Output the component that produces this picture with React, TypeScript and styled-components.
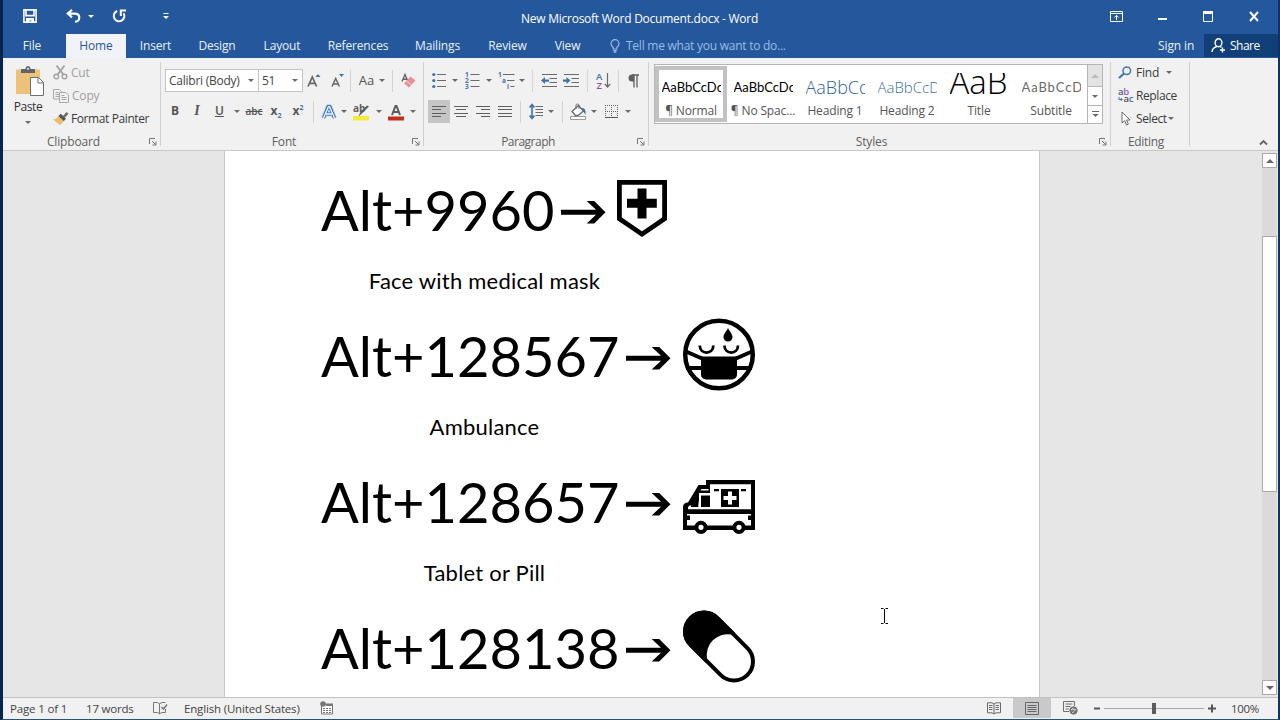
import React from "react";
import styled, { createGlobalStyle } from "styled-components";

const Global = createGlobalStyle`
  * { box-sizing: border-box; }
  body { margin: 0; background: #e6e6e6; font-family: "Open Sans", "Noto Sans", sans-serif; }
  svg { display: block; flex: none; overflow: visible; }
`;

const Window = styled.div`
  position: relative;
  width: 1280px;
  height: 720px;
  display: flex;
  flex-direction: column;
  overflow: hidden;
  background: #e6e6e6;
  border-left: 3px solid #06234f;
  border-right: 2px solid #14306a;
  border-bottom: 1px solid #2d5075;
  font-size: 12px;
  color: #444;
`;

/* ---------- title bar and tabs ---------- */

const TitleBar = styled.header`
  height: 34px;
  flex: none;
  display: flex;
  align-items: center;
  justify-content: space-between;
  padding-bottom: 2px;
  background: #24579b;
  color: #fff;
`;
const QuickAccess = styled.div`
  width: 518px;
  display: flex;
  align-items: center;
  padding-left: 20px;
`;
const DocTitle = styled.div`
  flex: 1;
  padding-top: 4px;
  letter-spacing: -0.25px;
  white-space: nowrap;
`;
const WindowButtons = styled.div`
  display: flex;
  width: 185px;
`;
const WindowButton = styled.div`
  width: 46px;
  flex: none;
  display: flex;
  justify-content: center;
`;
const TabBar = styled.nav`
  height: 24px;
  flex: none;
  display: flex;
  align-items: stretch;
  background: #24579b;
  color: #e9f1fb;
`;
const Tab = styled.div<{ $w: number; $active?: boolean; $inset?: number }>`
  width: ${(p) => p.$w}px;
  padding: 0 ${(p) => p.$inset ?? 0}px 1px 0;
  display: flex;
  justify-content: center;
  align-items: center;
  letter-spacing: -0.15px;
  white-space: nowrap;
  background: ${(p) => (p.$active ? "#f1f3f8" : "transparent")};
  color: ${(p) => (p.$active ? "#2b579a" : "inherit")};
`;
const TellMe = styled.div`
  flex: 1;
  display: flex;
  align-items: center;
  gap: 6px;
  padding: 0 0 1px 16px;
  letter-spacing: -0.25px;
  color: #9dbce6;
`;
const SignIn = styled.div`
  width: 46px;
  padding-bottom: 1px;
  display: flex;
  align-items: center;
  letter-spacing: -0.1px;
`;
const Share = styled.div`
  width: 74px;
  height: 23px;
  padding-left: 7px;
  display: flex;
  align-items: center;
  gap: 4px;
  background: #113f78;
  color: #fff;
  letter-spacing: -0.5px;
`;

/* ---------- ribbon ---------- */

const Ribbon = styled.section`
  height: 93px;
  flex: none;
  display: flex;
  background: #f1f1f1;
  border-bottom: 1px solid #c8c8c8;
`;
const Group = styled.div<{ $w: number }>`
  width: ${(p) => p.$w}px;
  flex: none;
  height: 84px;
  margin-top: 4px;
  display: flex;
  flex-direction: column;
  border-right: 1px solid #d0d0d0;
`;
const GroupBody = styled.div<{ $pl?: number; $pt?: number }>`
  flex: 1;
  min-height: 0;
  padding-left: ${(p) => p.$pl ?? 0}px;
  padding-top: ${(p) => p.$pt ?? 0}px;
`;
const GroupFooter = styled.div<{ $ls?: number }>`
  height: 8px;
  flex: none;
  display: flex;
  align-items: center;
  padding-right: 3px;
  color: #5f5f5f;
  letter-spacing: ${(p) => p.$ls ?? -0.15}px;
  & > span {
    flex: 1;
    text-align: center;
    margin-right: 5px;
    line-height: 16px;
  }
`;
const Row = styled.div`
  display: flex;
  align-items: center;
  height: 31px;
`;
const Cell = styled.div<{ $w: number; $on?: boolean }>`
  width: ${(p) => p.$w}px;
  height: 23px;
  flex: none;
  display: flex;
  align-items: center;
  justify-content: center;
  background: ${(p) => (p.$on ? "#c5c5c5" : "transparent")};
`;
const Divider = styled.i<{ $w: number }>`
  width: ${(p) => p.$w}px;
  height: 22px;
  flex: none;
  display: flex;
  justify-content: center;
  &::before {
    content: "";
    width: 1px;
    height: 100%;
    background: #d4d4d4;
  }
`;
const Caret = styled.i<{ $w?: number; $color?: string }>`
  width: ${(p) => p.$w ?? 10}px;
  flex: none;
  display: flex;
  justify-content: center;
  &::before {
    content: "";
    border: 3px solid transparent;
    border-top-color: ${(p) => p.$color ?? "#6a6a6a"};
    border-bottom-width: 0;
  }
`;
const ClipboardBody = styled.div`
  flex: 1;
  min-height: 0;
  display: flex;
`;
const PasteButton = styled.div`
  width: 50px;
  padding-top: 4px;
  display: flex;
  flex-direction: column;
  align-items: center;
  & > svg { margin-left: 4px; }
  & > span { margin-top: 3px; line-height: 14px; letter-spacing: -0.4px; color: #333; }
  & > i { margin-top: 7px; }
`;
const CommandList = styled.div`
  margin-top: -1px;
  display: flex;
  flex-direction: column;
`;
const Command = styled.div<{ $off?: boolean; $gap?: number; $ls?: number }>`
  height: 23px;
  display: flex;
  align-items: center;
  gap: ${(p) => p.$gap ?? 3}px;
  white-space: nowrap;
  letter-spacing: ${(p) => p.$ls ?? -0.2}px;
  color: ${(p) => (p.$off ? "#a0a0a0" : "#3b3b3b")};
`;
const Combo = styled.div<{ $w: number }>`
  width: ${(p) => p.$w}px;
  height: 23px;
  flex: none;
  display: flex;
  align-items: center;
  justify-content: space-between;
  padding: 0 2px 0 3px;
  margin-right: -1px;
  background: #fff;
  border: 1px solid #c3c3c3;
  white-space: nowrap;
  letter-spacing: -0.25px;
`;
const Glyph = styled.span<{ $size?: number; $weight?: number; $italic?: boolean; $deco?: string; $serif?: boolean }>`
  margin-bottom: 2px;
  font-size: ${(p) => p.$size ?? 12}px;
  font-weight: ${(p) => p.$weight ?? 400};
  font-style: ${(p) => (p.$italic ? "italic" : "normal")};
  text-decoration: ${(p) => p.$deco ?? "none"};
  font-family: ${(p) => (p.$serif ? '"Liberation Serif", serif' : "inherit")};
  line-height: 16px;
  color: #555;
  & sub, & sup { font-size: 7px; line-height: 0; color: #3f74a8; }
`;
const Gallery = styled.div`
  width: 449px;
  height: 60px;
  display: flex;
  background: #fff;
  border: 1px solid #b5b5b5;
`;
const StyleItem = styled.div<{ $on?: boolean }>`
  width: 72px;
  flex: none;
  height: 56px;
  margin-top: 1px;
  border: 4px solid ${(p) => (p.$on ? "#c2c2c2" : "transparent")};
  display: flex;
  flex-direction: column;
  align-items: center;
  & > span { line-height: 15px; white-space: nowrap; letter-spacing: -0.15px; color: #555; }
`;
const Preview = styled.div<{ $size: number; $color: string; $ls?: number; $light?: boolean; $lh?: number }>`
  width: 59px;
  height: 30px;
  flex: none;
  margin-top: 3px;
  line-height: ${(p) => p.$lh ?? 28}px;
  overflow: hidden;
  white-space: nowrap;
  font-family: ${(p) => (p.$light ? '"Open Sans"' : '"Lato"')}, sans-serif;
  font-weight: ${(p) => (p.$light ? 300 : 400)};
  font-size: ${(p) => p.$size}px;
  letter-spacing: ${(p) => p.$ls ?? 0}px;
  color: ${(p) => p.$color};
`;
const GalleryScroll = styled.div`
  margin-left: auto;
  width: 15px;
  display: flex;
  flex-direction: column;
  border-left: 1px solid #b5b5b5;
`;
const GalleryButton = styled.div<{ $h: number; $off?: boolean }>`
  height: ${(p) => p.$h}px;
  display: flex;
  align-items: center;
  justify-content: center;
  background: ${(p) => (p.$off ? "#e3e3e3" : "#fff")};
  & + & { border-top: 1px solid #b5b5b5; }
`;
const RibbonEnd = styled.div`
  flex: 1;
  display: flex;
  align-items: flex-end;
  justify-content: flex-end;
  padding: 0 10px 4px 0;
`;

/* ---------- document ---------- */

const Workspace = styled.main`
  flex: 1;
  min-height: 0;
  display: flex;
  background: #e6e6e6;
`;
const Page = styled.article`
  width: 816px;
  margin-left: 221px;
  padding: 21px 0 0 96px;
  overflow: hidden;
  background: #fff;
  border: solid #c9c9c9;
  border-width: 0 1px;
  font-family: "Lato", sans-serif;
  color: #000;
`;
const KeyLine = styled.div`
  height: 76px;
  display: flex;
  align-items: flex-start;
`;
const KeyText = styled.span<{ $w: number }>`
  width: ${(p) => p.$w}px;
  flex: none;
  font-size: 56px;
  line-height: 76px;
  white-space: nowrap;
`;
const ArrowSlot = styled.span`
  width: 45px;
  padding-top: 28px;
  flex: none;
`;
const SymbolSlot = styled.span<{ $x: number; $y: number }>`
  padding: ${(p) => p.$y}px 0 0 ${(p) => p.$x}px;
`;
const Caption = styled.div`
  width: 327px;
  height: 70px;
  line-height: 66px;
  text-align: center;
  font-size: 22px;
  letter-spacing: 0.22px;
`;
const ScrollBar = styled.aside`
  width: 15px;
  margin: 2px 1px 2px auto;
  display: flex;
  flex-direction: column;
  background: #dadada;
`;
const ScrollButton = styled.div`
  height: 15px;
  display: flex;
  align-items: center;
  justify-content: center;
  background: #fff;
  border: 1px solid #ababab;
`;
const Thumb = styled.div`
  margin-top: 68px;
  margin-bottom: auto;
  height: 256px;
  background: #fff;
  border: 1px solid #ababab;
`;
const Pointer = styled.div`
  position: absolute;
  left: 875px;
  top: 608px;
`;

/* ---------- status bar ---------- */

const StatusBar = styled.footer`
  height: 22px;
  flex: none;
  display: flex;
  align-items: center;
  background: #f1f1f1;
  border-top: 1px solid #c2c2c2;
  font-size: 11.5px;
  padding: 0 0 1px 7px;
`;
const StatusItem = styled.div<{ $w: number; $ls?: number }>`
  width: ${(p) => p.$w}px;
  flex: none;
  white-space: nowrap;
  letter-spacing: ${(p) => p.$ls ?? 0}px;
`;
const ViewButton = styled.div<{ $on?: boolean }>`
  width: 38px;
  height: 20px;
  display: flex;
  align-items: center;
  justify-content: center;
  background: ${(p) => (p.$on ? "#c9c9c9" : "transparent")};
`;
const Right = styled.div`
  margin-left: auto;
  display: flex;
  align-items: center;
`;
const Slider = styled.div`
  width: 100px;
  height: 11px;
  margin: 0 4px;
  display: flex;
  align-items: center;
  justify-content: center;
  background: linear-gradient(#a8a8a8, #a8a8a8) 0 5px / 100% 1px no-repeat;
  &::before { content: ""; width: 4px; height: 11px; background: #5c5c5c; }
`;

/* ---------- drawings ---------- */

const G = "#6b6b6b";
const B = "#3f74a8";

const Launcher = () => (
  <svg width="8" height="8" viewBox="0 0 8 8" fill="none" stroke="#777">
    <path d="M.5 6V.5H6M3 3l3.5 3.5M7 3.5V7H3.5" />
  </svg>
);
const SaveIcon = () => (
  <svg width="14" height="14" viewBox="0 0 14 14" fill="none" stroke="#fff" strokeWidth="1.8">
    <path d="M.9.9h12.200v12.200H.9zM3 1v5.600h8V1" strokeWidth="1.600" />
    <path d="M3 9h8v4.500H8.500v-2h-2v2H3z" fill="#fff" stroke="none" />
  </svg>
);
const UndoIcon = () => (
  <svg width="15" height="14" viewBox="0 0 15 14" fill="none" stroke="#fff" strokeWidth="2.2">
    <path d="M6 .8L1.800 4.600 6 8.400M2.300 4.600h6.200c3 0 4.800 1.500 4.800 3.800S11.500 12.600 9 12.600" />
  </svg>
);
const RedoIcon = () => (
  <svg width="15" height="14" viewBox="0 0 15 14" fill="none" stroke="#fff" strokeWidth="2">
    <path d="M5.200 2A5.300 5.300 0 1 0 11.600 4.200M8.800 7V1.500h5.200" />
  </svg>
);
const CustomizeIcon = () => (
  <svg width="6" height="8" viewBox="0 0 6 8" fill="#fff"><path d="M.5 1h5v1h-5zM0 4h6L3 7z" /></svg>
);
const RibbonOptions = () => (
  <svg width="13" height="11" viewBox="0 0 13 11" fill="none" stroke="#fff">
    <path d="M.5.5h12v10H.5zM.5 2.500h12M6.500 9V4.500M4.300 6.500l2.200-2.200 2.200 2.200" />
  </svg>
);
const MinIcon = () => <svg width="9" height="11" viewBox="0 0 9 11"><path d="M0 7h9v2H0z" fill="#fff" /></svg>;
const MaxIcon = () => (
  <svg width="10" height="11" viewBox="0 0 10 11"><path d="M.5 1.500h9v9h-9z" fill="none" stroke="#fff" /><path d="M0 0h10v3H0z" fill="#fff" /></svg>
);
const CloseIcon = () => (
  <svg width="10" height="11" viewBox="0 0 10 11"><path d="M1 1l8 9M9 1l-8 9" stroke="#fff" strokeWidth="2" /></svg>
);
const BulbIcon = () => (
  <svg width="10" height="14" viewBox="0 0 10 14" fill="none" stroke="#9dbce6" strokeWidth="1.200">
    <path d="M3.200 10V8.500C1.800 7.300 1 6.300 1 4.700a4 4 0 0 1 8 0c0 1.600-.8 2.600-2.200 3.800V10zM3.200 11.700h3.600M3.800 13.200h2.400" />
  </svg>
);
const PersonIcon = () => (
  <svg width="15" height="15" viewBox="0 0 15 15" fill="none" stroke="#fff" strokeWidth="1.400">
    <ellipse cx="7.500" cy="4.800" rx="3.400" ry="4" />
    <path d="M5.800 8.500C3 9.300 1.200 11 1 14M9 8.500l1.500.8M11.500 9.500v5M9 12h5" />
  </svg>
);
const PasteIcon = () => (
  <svg width="28" height="31" viewBox="0 0 28 31">
    <path d="M0 3.500h24V28H0z" fill="#ecc27a" />
    <path d="M5 3h4.500c0-4 5-4 5 0H19v4H5z" fill="#5f6468" />
    <circle cx="12" cy="2.700" r="1" fill="#f1f1f1" />
    <path d="M14.500 11.500h8l5 5v13h-13z" fill="#fff" stroke="#6f6f6f" />
    <path d="M22 11.500v5.500h5.500" fill="none" stroke="#6f6f6f" />
  </svg>
);
const CutIcon = () => (
  <svg width="15" height="15" viewBox="0 0 15 15" fill="none" stroke="#a3a3a3" strokeWidth="1.400">
    <circle cx="3.300" cy="11.500" r="2.300" /><circle cx="11.500" cy="11.500" r="2.300" />
    <path d="M3.500.5l6.800 9M11.500.5l-6.800 9" strokeWidth="1.900" />
  </svg>
);
const CopyIcon = () => (
  <svg width="16" height="14" viewBox="0 0 16 14" fill="#f1f1f1" stroke="#a8a8a8">
    <path d="M.5.5h6l2 2v7.500h-8zM2.500 3.500h3M2.500 5.500h4M2.500 7.500h4" />
    <path d="M6.500 3.500h6l3 2.500v7.500h-9zM8.500 6.500h3M8.500 8.500h5M8.500 10.500h5" />
  </svg>
);
const PainterIcon = () => (
  <svg width="16" height="15" viewBox="0 0 16 15">
    <path d="M6 4.500l5.500 5L7 14 0 8.500l3-.7z" fill="#ecb96d" />
    <path d="M5.500 5l2.200-2.300L13 7.800 10.800 10z" fill="#4f5356" />
    <path d="M9.500 5.500l4-4.500 2 1.800-4.200 4.400z" fill="#6b6b6b" />
  </svg>
);
const GrowIcon = ({ down }: { down?: boolean }) => (
  <svg width="14" height="16" viewBox="0 0 14 16">
    {down ? (
      <><path d="M2 13.500L5.700 5.500l3.700 8M3.300 11h4.800" fill="none" stroke="#666" strokeWidth="1.500" /><path d="M9 1h5l-2.500 3z" fill={B} /></>
    ) : (
      <><path d="M1 13.500L5.300 4l4.300 9.500M2.500 10.300h5.700" fill="none" stroke="#666" strokeWidth="1.700" /><path d="M8.500 4h5L11 1z" fill={B} /></>
    )}
  </svg>
);
const ClearIcon = () => (
  <svg width="15" height="16" viewBox="0 0 15 16">
    <path d="M1 8.500L4 1.500l3 7M2 6.300h4" fill="none" stroke="#666" strokeWidth="1.400" />
    <path d="M9.500 3.500l5 4-6.500 7-5-4z" fill="#e8909a" /><path d="M5.500 8l5 4" stroke="#f7d3d6" />
  </svg>
);
const TextFxIcon = () => (
  <svg width="16" height="16" viewBox="0 0 16 16" strokeLinejoin="round">
    <path d="M2.500 14L7 2.500h2L13.500 14M5 10h6" fill="none" stroke="#a9cdee" strokeWidth="4.500" />
    <path d="M2.500 14L7.200 2.500h1.600L13.500 14M5 10h6" fill="none" stroke="#2f6aa8" strokeWidth="3.200" />
    <path d="M2.500 14L7.500 2.500h1L13.500 14M5 10h6" fill="none" stroke="#f4f9ff" strokeWidth="1.400" />
  </svg>
);
const HighlightIcon = () => (
  <svg width="18" height="18" viewBox="0 0 18 18">
    <path d="M1 13h16v4.500H1z" fill="#f4ea3a" />
    <text x="1" y="9" fontSize="10" fontWeight="700" fill="#5f5f5f" fontFamily="Open Sans">ab</text>
    <path d="M17 3.500l-6 6-4.500 4 2-5 6.500-6z" fill="#5f5f5f" />
  </svg>
);
const FontColorIcon = () => (
  <svg width="16" height="18" viewBox="0 0 16 18">
    <path d="M0 13.500h16v4H0z" fill="#c0301c" />
    <path d="M4 12L7.500 3h1L12 12M5.300 9h5.400" fill="none" stroke="#5b5b5b" strokeWidth="2" />
  </svg>
);
const BulletsIcon = () => (
  <svg width="14" height="15" viewBox="0 0 14 15">
    {[1.5, 7.5, 13.5].map((y) => (<g key={y}><circle cx="1.800" cy={y} r="1.600" fill={B} /><path d={`M5 ${y}h9`} stroke={G} /></g>))}
  </svg>
);
const NumberingIcon = () => (
  <svg width="15" height="17" viewBox="0 0 15 17">
    {[2.5, 8.5, 14.5].map((y, i) => (
      <g key={y}><text x="0" y={y + 2.3} fontSize="6.500" fontWeight="700" fill={B} fontFamily="Open Sans">{i + 1}</text><path d={`M5.500 ${y}h9`} stroke={G} /></g>
    ))}
  </svg>
);
const MultiIcon = () => (
  <svg width="17" height="17" viewBox="0 0 17 17" fontSize="6.500" fontWeight="700" fontFamily="Open Sans">
    <text x="0" y="5" fill={B}>1</text><text x="4" y="10.500" fill={B}>a</text><text x="9" y="16.500" fill={B}>i</text>
    <path d="M5 2.500h11.500M9 8.500h7.500M12.500 14.500h4" stroke={G} />
  </svg>
);
const IndentIcon = ({ right }: { right?: boolean }) => (
  <svg width="16" height="15" viewBox="0 0 16 15">
    <path d="M1 1.500h15M8.500 5.500H16M8.500 9.500H16M1 13.500h15" stroke={G} />
    {right ? <path d="M0 6.500h3.500V4l4 3.500-4 3.500V8.700H0z" fill={B} /> : <path d="M8 6.500H4V4L0 7.500 4 11V8.700h4z" fill={B} />}
  </svg>
);
const SortIcon = () => (
  <svg width="15" height="17" viewBox="0 0 15 17">
    <text x="0" y="8" fontSize="9.500" fontWeight="600" fill={B} fontFamily="Open Sans">A</text>
    <text x="0.500" y="16.500" fontSize="9.500" fontWeight="600" fill="#8a5aa5" fontFamily="Open Sans">Z</text>
    <path d="M11.500 1v14M8.800 12l2.700 3 2.700-3" fill="none" stroke={G} strokeWidth="1.200" />
  </svg>
);
const PilcrowIcon = () => (
  <svg width="11" height="14" viewBox="0 0 11 14">
    <path d="M6 7.500H4A3.500 3.500 0 0 1 4 .5h2z" fill="#5f5f5f" /><path d="M4 1h7M6 1v12.500M9 1v12.500" stroke="#5f5f5f" strokeWidth="1.300" />
  </svg>
);
const AlignIcon = ({ kind }: { kind: "l" | "c" | "r" | "j" }) => (
  <svg width="14" height="11" viewBox="0 0 14 11" stroke="#5f5f5f">
    {[0.5, 3.5, 7.5, 10.5].map((y, i) => {
      const w = kind === "j" || i % 2 === 0 ? 14 : kind === "c" ? 10 : 9;
      const x = kind === "r" ? 14 - w : kind === "c" ? (14 - w) / 2 : 0;
      return <path key={y} d={`M${x} ${y}h${w}`} />;
    })}
  </svg>
);
const SpacingIcon = () => (
  <svg width="14" height="17" viewBox="0 0 14 17">
    <path d="M3 2v13M.6 4.500L3 1.500l2.400 3M.6 12.500L3 15.500l2.400-3" fill="none" stroke={B} strokeWidth="1.600" />
    <path d="M6.500 3.500H14M6.500 6.500H14M6.500 9.500H14M6.500 12.500H14" stroke={G} />
  </svg>
);
const ShadingIcon = () => (
  <svg width="16" height="17" viewBox="0 0 16 17">
    <path d="M.5 13.500h15v3H.5z" fill="#fff" stroke="#999" />
    <path d="M2 8.500L8.500 2.500l5 5.500-5.500 4.500H5.500z" fill="#fff" stroke={G} strokeWidth="1.300" />
    <path d="M6 6V2.500c0-2 3-2 3 0V6" fill="none" stroke={G} /><path d="M12 5c3 0 4 2 3.500 7-1-2-1.500-3-3-4z" fill={B} />
  </svg>
);
const BordersIcon = () => (
  <svg width="13" height="13" viewBox="0 0 13 13" fill="none" stroke="#666">
    <path d="M.5 0v12M12.500 0v12M6.500 0v12M0 .5h13M0 6.500h13" strokeDasharray="1 1" /><path d="M0 12.500h13" stroke="#555" />
  </svg>
);
const FindIcon = () => (
  <svg width="14" height="13" viewBox="0 0 14 13" fill="none" stroke="#3f78b0">
    <circle cx="8.800" cy="4.700" r="3.800" strokeWidth="1.500" /><path d="M6 7.500L1 12" strokeWidth="2.300" />
  </svg>
);
const ReplaceIcon = () => (
  <svg width="17" height="17" viewBox="0 0 17 17" fontSize="9.500" fontWeight="600" fontFamily="Open Sans">
    <text x="0" y="8" fill="#4a5f86">a<tspan fill="#9a5fae">b</tspan></text><text x="5.500" y="15" fill="#555">a<tspan fill={B}>c</tspan></text>
    <path d="M1 10v2.500h3M2.800 11l1.500 1.500L2.800 14" fill="none" stroke={B} />
  </svg>
);
const SelectIcon = () => (
  <svg width="10" height="15" viewBox="0 0 10 15" fill="#fff" stroke="#6a6a6a"><path d="M1 1v11l2.700-2.400L5.500 14l1.800-.8L5.600 9H9z" /></svg>
);
const ChevronUp = () => (
  <svg width="9" height="7" viewBox="0 0 9 7"><path d="M1 5.500l3.500-3.500L8 5.500" fill="none" stroke="#666" strokeWidth="1.900" /></svg>
);
const Tri = ({ up, c = "#666" }: { up?: boolean; c?: string }) => (
  <svg width="8" height="4" viewBox="0 0 8 4"><path d={up ? "M0 4h8L4 0z" : "M0 0h8L4 4z"} fill={c} /></svg>
);
const RightArrow = () => (
  <svg width="45" height="24" viewBox="0 0 45 24"><path d="M0 9.700h35L25.700 1h7.500L44.500 12.200 33.200 23.400h-7.500l9.300-8.700H0z" /></svg>
);
const ShieldCross = () => (
  <svg width="50" height="58" viewBox="0 0 50 58">
    <path d="M2.400 2.400h45.200v36.400L25 54.200 2.400 38.800z" fill="none" stroke="#000" strokeWidth="4.800" />
    <path d="M20.500 8.500h9v10.300h10.300v9H29.500V38.500h-9V27.800H10v-9h10.500z" />
  </svg>
);
const MaskFace = () => (
  <svg width="72" height="73" viewBox="0 0 72 73" fill="none" stroke="#000" strokeWidth="4">
    <circle cx="36" cy="36.500" r="33.800" strokeWidth="4.500" />
    <path d="M16.800 27.500c0 9.500 13.500 9.500 13.500 0M41.500 27.500c0 9.500 13.500 9.500 13.500 0" strokeWidth="2.800" />
    <path d="M45 10c2 4 4.500 6 4.500 9a4.500 4.500 0 0 1-9 0c0-3 2.500-5 4.500-9z" fill="#000" stroke="none" />
    <path d="M3 33.500l16 7M69 33.500l-16 7M3 50h16M53 50h16" strokeWidth="3.900" />
    <path d="M18 38.500h36v18a5 5 0 0 1-5 5H23a5 5 0 0 1-5-5z" fill="#000" stroke="none" />
  </svg>
);
const Ambulance = () => (
  <svg width="72" height="54" viewBox="0 0 72 54">
    <path d="M23 0h49v50H0V27c0-3 2-4.500 5-4.500L15.500 5H23z" />
    <path d="M27 4.300h41v24.900H27z" fill="#fff" />
    <path d="M16 13h11v16.200H16zM5 27.300l1.500-1.800H15l2-12V29.200H5z" fill="#fff" />
    <path d="M8 26L15.300 13.200V27H8zM18 15.500h9V27h-9z" />
    <path d="M18.500 9h7v1.500h-8z" fill="#fff" />
    <path d="M4 34h64v1.500h-3V40h3v5.500H4V40h3v-4.500H4z" fill="#fff" />
    <path d="M31 9h5v2.200h-5zM58 9h5v2.200h-5zM38 9h18v18H38z" />
    <path d="M45 11.500h4V16h4.500v4H49v4.500h-4V20h-4.500v-4H45z" fill="#fff" />
    <circle cx="18" cy="47.300" r="4.600" fill="#fff" stroke="#000" strokeWidth="4" /><circle cx="56" cy="47.300" r="4.600" fill="#fff" stroke="#000" strokeWidth="4" />
  </svg>
);
const Pill = () => (
  <svg width="72" height="73" viewBox="0 0 72 73">
    <g transform="rotate(45 36 36.500)">
      <rect x="-4.200" y="17.500" width="80.400" height="38" rx="19" fill="#fff" stroke="#000" strokeWidth="4" />
      <path d="M38 15.500H14.800a21 21 0 0 0 0 42H38L36 53.500a21 21 0 0 1 0-34z" />
    </g>
  </svg>
);
const IBeam = () => (
  <svg width="13" height="17" viewBox="0 0 13 17"><path d="M3 .5h2.500M7.500.5H10M3 15.500h2.500M7.500 15.500H10M6.500 1v14" stroke="#000" fill="none" /></svg>
);
const ProofIcon = () => (
  <svg width="15" height="14" viewBox="0 0 15 14" fill="none" stroke="#777">
    <path d="M.5 1.500h4l2 1.300v10L4.500 11.500h-4zM6.500 2.800L9 1.500h3.500M12.500 8v3.500H9l-2.500 1.300" /><path d="M8.500 6l2 2L14 3.500" strokeWidth="1.500" />
  </svg>
);
const MacroIcon = () => (
  <svg width="14" height="14" viewBox="0 0 14 14"><path d="M1.500 3.500h11v9.500h-11z" fill="#fff" stroke="#777" /><path d="M6 2.500h7v2.500H6z" fill="#777" /><path d="M3 7.500h8M3 9.500h8M3 11.500h8" stroke="#777" strokeDasharray="2 1" /><circle cx="3" cy="3" r="2.800" fill="#777" /></svg>
);
const ReadIcon = () => (
  <svg width="14" height="13" viewBox="0 0 14 13" fill="none" stroke="#6a6a6a">
    <path d="M7 2L5 .8H.5v10H5L7 12l2-1.200h4.500v-10H9zM7 2v10M2 3.500h3.500M2 5.500h3.500M2 7.500h3.500M8.500 3.500H12M8.500 5.500H12M8.500 7.500H12" />
  </svg>
);
const PrintIcon = () => (
  <svg width="14" height="13" viewBox="0 0 14 13" fill="none" stroke="#666"><path d="M.5.5h13v12H.5zM2.500 3.500h9M2.500 5.500h9M2.500 7.500h9M2.500 9.500h9" /></svg>
);
const WebIcon = () => (
  <svg width="15" height="14" viewBox="0 0 15 14" fill="none" stroke="#707070">
    <path d="M6 10.500H.5V.5h11V5M2.500 3h7M2.500 5.500h5M2.500 8H6" /><circle cx="10.500" cy="9.500" r="3.700" fill="#777" /><path d="M8 9l2-1.500 1 1.500 2-.5M9.500 12l1-1.500" stroke="#eee" />
  </svg>
);
const Minus = () => <svg width="6" height="9" viewBox="0 0 6 9"><path d="M0 3.500h6v2H0z" fill="#555" /></svg>;
const Plus = () => <svg width="8" height="9" viewBox="0 0 8 9"><path d="M0 3.500h8v2H0zM3 .5h2v8H3z" fill="#555" /></svg>;

const tabs = [
  { name: "Insert", w: 59 }, { name: "Design", w: 64 }, { name: "Layout", w: 66 }, { name: "References", w: 86 },
  { name: "Mailings", w: 73 }, { name: "Review", w: 67 }, { name: "View", w: 53 },
];

const styleItems = [
  { label: "¶ Normal", text: "AaBbCcDc", size: 13, color: "#000", ls: 0 },
  { label: "¶ No Spac...", text: "AaBbCcDc", size: 13, color: "#000", ls: 0 },
  { label: "Heading 1", text: "AaBbCc", size: 18, color: "#2e6496", light: true },
  { label: "Heading 2", text: "AaBbCcD", size: 15, color: "#3a729f", light: true },
  { label: "Title", text: "AaB", size: 33, color: "#000", light: true, lh: 17 },
  { label: "Subtitle", text: "AaBbCcD", size: 13, color: "#6a6a6a", ls: 0.9 },
];

const entries = [
  { code: "Alt+9960", w: 240, icon: <ShieldCross />, x: 11, y: 8, next: "Face with medical mask" },
  { code: "Alt+128567", w: 305, icon: <MaskFace />, x: 12, y: 0, next: "Ambulance" },
  { code: "Alt+128657", w: 305, icon: <Ambulance />, x: 12, y: 16, next: "Tablet or Pill" },
  { code: "Alt+128138", w: 305, icon: <Pill />, x: 12, y: 0 },
];

export default function App() {
  return (
    <>
      <Global />
      <Window>
        <TitleBar>
          <QuickAccess>
            <Cell $w={14}><SaveIcon /></Cell>
            <Cell $w={29} />
            <Cell $w={15}><UndoIcon /></Cell>
            <Caret $w={20} $color="#fff" />
            <Cell $w={37}><RedoIcon /></Cell>
            <Cell $w={55}><CustomizeIcon /></Cell>
          </QuickAccess>
          <DocTitle>New Microsoft Word Document.docx - Word</DocTitle>
          <WindowButtons>
            <WindowButton><RibbonOptions /></WindowButton>
            <WindowButton><MinIcon /></WindowButton>
            <WindowButton><MaxIcon /></WindowButton>
            <WindowButton><CloseIcon /></WindowButton>
          </WindowButtons>
        </TitleBar>
        <TabBar>
          <Tab $w={63} $inset={5}>File</Tab>
          <Tab $w={60} $active>Home</Tab>
          {tabs.map((t) => <Tab key={t.name} $w={t.w}>{t.name}</Tab>)}
          <TellMe><BulbIcon />Tell me what you want to do...</TellMe>
          <SignIn>Sign in</SignIn>
          <Share><PersonIcon />Share</Share>
        </TabBar>
        <Ribbon>
          <Group $w={158}>
            <ClipboardBody>
              <PasteButton><PasteIcon /><span>Paste</span><Caret /></PasteButton>
              <CommandList>
                <Command $off><CutIcon />Cut</Command>
                <Command $off><CopyIcon />Copy</Command>
                <Command $gap={2} $ls={-0.4}><PainterIcon />Format Painter</Command>
              </CommandList>
            </ClipboardBody>
            <GroupFooter><span>Clipboard</span><Launcher /></GroupFooter>
          </Group>
          <Group $w={263}>
            <GroupBody $pl={4} $pt={3}>
              <Row>
                <Combo $w={94}>Calibri (Body)<Caret /></Combo>
                <Combo $w={45}>51<Caret /></Combo>
                <Cell $w={24}><GrowIcon /></Cell>
                <Cell $w={21}><GrowIcon down /></Cell>
                <Divider $w={6} />
                <Cell $w={27}><Glyph $size={13}>Aa</Glyph></Cell>
                <Caret $w={3} />
                <Divider $w={18} />
                <Cell $w={15}><ClearIcon /></Cell>
              </Row>
              <Row>
                <Cell $w={20}><Glyph $weight={700}>B</Glyph></Cell>
                <Cell $w={24}><Glyph $weight={700} $italic $serif $size={14}>I</Glyph></Cell>
                <Cell $w={21}><Glyph $weight={600} $deco="underline">U</Glyph></Cell>
                <Caret $w={13} />
                <Cell $w={22}><Glyph $size={10} $weight={600} $deco="line-through">abc</Glyph></Cell>
                <Cell $w={22}><Glyph $weight={700}>x<sub>2</sub></Glyph></Cell>
                <Cell $w={22}><Glyph $weight={700}>x<sup>2</sup></Glyph></Cell>
                <Divider $w={9} />
                <Cell $w={22}><TextFxIcon /></Cell>
                <Caret $w={7} />
                <Cell $w={28}><HighlightIcon /></Cell>
                <Caret $w={7} />
                <Cell $w={28}><FontColorIcon /></Cell>
                <Caret $w={5} />
              </Row>
            </GroupBody>
            <GroupFooter><span>Font</span><Launcher /></GroupFooter>
          </Group>
          <Group $w={225}>
            <GroupBody $pl={4} $pt={3}>
              <Row>
                <Cell $w={21}><BulletsIcon /></Cell>
                <Caret $w={12} />
                <Cell $w={23}><NumberingIcon /></Cell>
                <Caret $w={10} />
                <Cell $w={25}><MultiIcon /></Cell>
                <Caret $w={5} />
                <Divider $w={17} />
                <Cell $w={16}><IndentIcon /></Cell>
                <Cell $w={28}><IndentIcon right /></Cell>
                <Divider $w={4} />
                <Cell $w={28}><SortIcon /></Cell>
                <Divider $w={2} />
                <Cell $w={28}><PilcrowIcon /></Cell>
              </Row>
              <Row>
                <Cell $w={22} $on><AlignIcon kind="l" /></Cell>
                <Cell $w={22}><AlignIcon kind="c" /></Cell>
                <Cell $w={22}><AlignIcon kind="r" /></Cell>
                <Cell $w={22}><AlignIcon kind="j" /></Cell>
                <Divider $w={9} />
                <Cell $w={22}><SpacingIcon /></Cell>
                <Caret $w={7} />
                <Divider $w={17} />
                <Cell $w={14}><ShadingIcon /></Cell>
                <Caret $w={18} />
                <Cell $w={16}><BordersIcon /></Cell>
                <Caret $w={18} />
              </Row>
            </GroupBody>
            <GroupFooter $ls={-0.5}><span>Paragraph</span><Launcher /></GroupFooter>
          </Group>
          <Group $w={462}>
            <GroupBody $pl={5} $pt={2}>
              <Gallery>
                {styleItems.map((s, i) => (
                  <StyleItem key={s.label} $on={i === 0}>
                    <Preview $size={s.size} $color={s.color} $ls={s.ls} $light={s.light} $lh={s.lh}>{s.text}</Preview>
                    <span>{s.label}</span>
                  </StyleItem>
                ))}
                <GalleryScroll>
                  <GalleryButton $h={21} $off><Tri up c="#bbb" /></GalleryButton>
                  <GalleryButton $h={19}><Caret /></GalleryButton>
                  <GalleryButton $h={18}>
                    <svg width="7" height="7" viewBox="0 0 7 7" fill="#666"><path d="M0 0h7v1H0zM.5 3h6l-3 3z" /></svg>
                  </GalleryButton>
                </GalleryScroll>
              </Gallery>
            </GroupBody>
            <GroupFooter><span>Styles</span><Launcher /></GroupFooter>
          </Group>
          <Group $w={79}>
            <GroupBody $pl={7}>
              <CommandList>
                <Command $gap={4}><FindIcon />Find<Caret $w={12} /></Command>
                <Command $gap={1} $ls={-0.4}><ReplaceIcon />Replace</Command>
                <Command $gap={2} $ls={-0.4}><Cell $w={16}><SelectIcon /></Cell>Select<Caret $w={5} /></Command>
              </CommandList>
            </GroupBody>
            <GroupFooter $ls={-0.3}><span>Editing</span></GroupFooter>
          </Group>
          <RibbonEnd><ChevronUp /></RibbonEnd>
        </Ribbon>
        <Workspace>
          <Page>
            {entries.map((e) => (
              <React.Fragment key={e.code}>
                <KeyLine>
                  <KeyText $w={e.w}>{e.code}</KeyText>
                  <ArrowSlot><RightArrow /></ArrowSlot>
                  <SymbolSlot $x={e.x} $y={e.y}>{e.icon}</SymbolSlot>
                </KeyLine>
                {e.next && <Caption>{e.next}</Caption>}
              </React.Fragment>
            ))}
          </Page>
          <ScrollBar>
            <ScrollButton><Tri up /></ScrollButton>
            <Thumb />
            <ScrollButton><Tri /></ScrollButton>
          </ScrollBar>
        </Workspace>
        <StatusBar>
          <StatusItem $w={76} $ls={-0.15}>Page 1 of 1</StatusItem>
          <StatusItem $w={67} $ls={-0.2}>17 words</StatusItem>
          <StatusItem $w={31}><ProofIcon /></StatusItem>
          <StatusItem $w={136} $ls={-0.17}>English (United States)</StatusItem>
          <MacroIcon />
          <Right>
            <ViewButton><ReadIcon /></ViewButton>
            <ViewButton $on><PrintIcon /></ViewButton>
            <ViewButton><WebIcon /></ViewButton>
            <Cell $w={5} />
            <Minus /><Slider /><Plus />
            <Cell $w={15} />
            <StatusItem $w={47} $ls={-0.3}>100%</StatusItem>
          </Right>
        </StatusBar>
        <Pointer><IBeam /></Pointer>
      </Window>
    </>
  );
}
